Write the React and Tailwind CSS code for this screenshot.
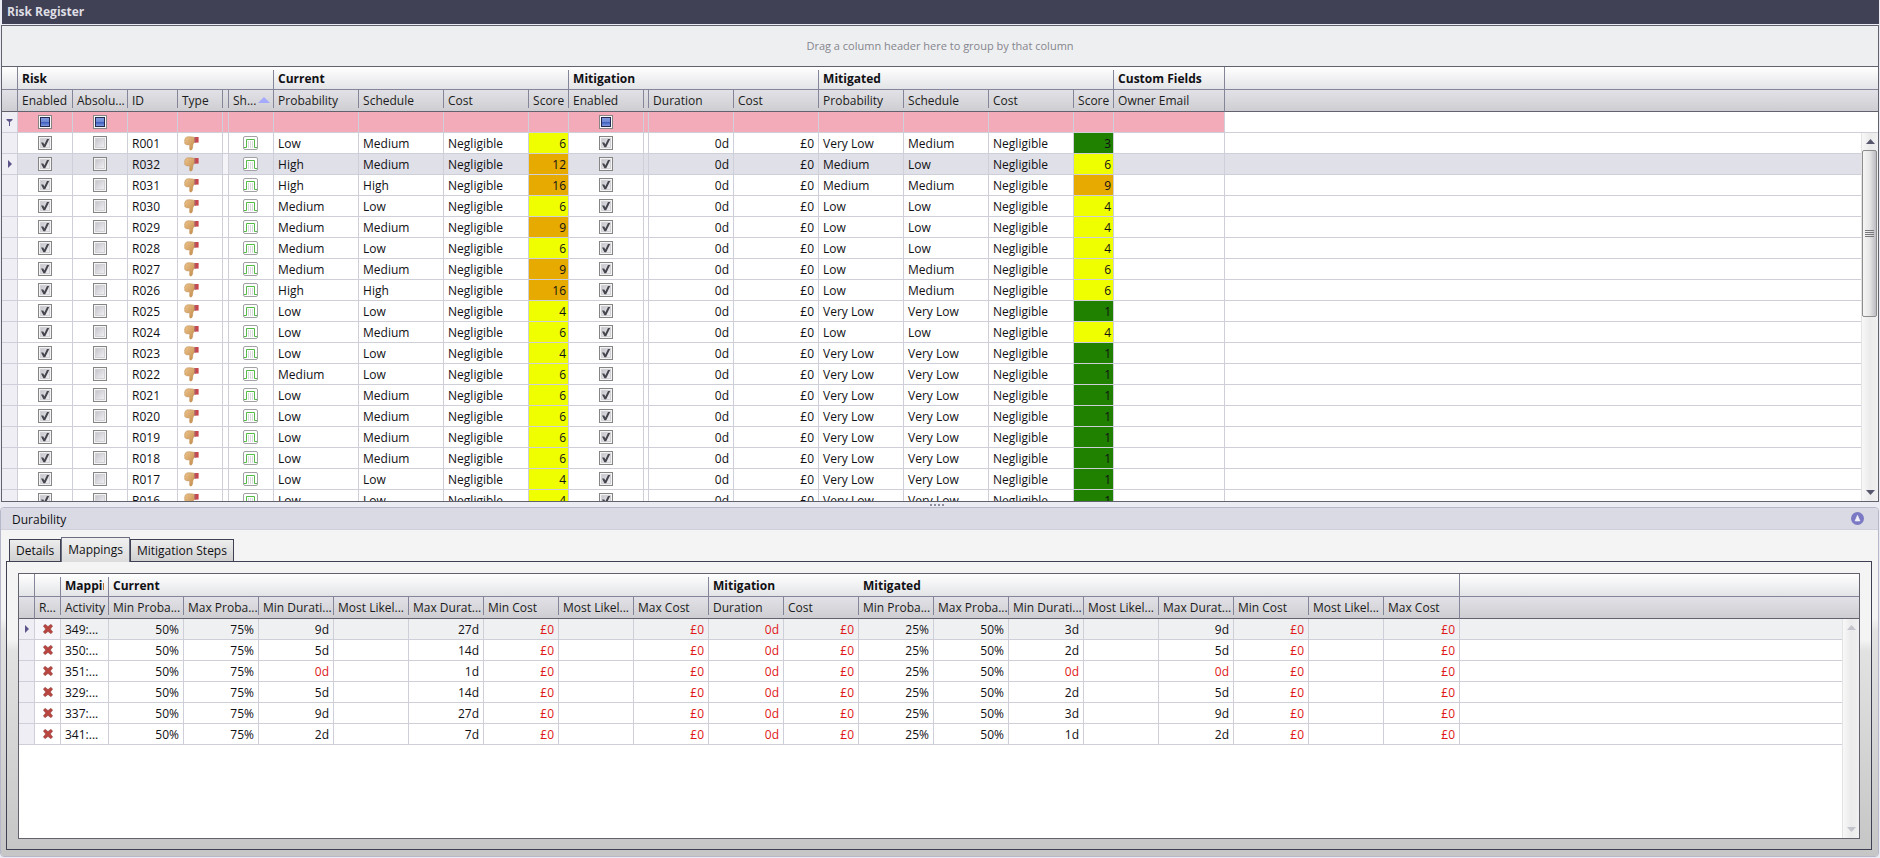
const RISK_ROWS = [
  ["R001", "Low", "Medium", 6, "Very Low", "Medium", 3],
  ["R032", "High", "Medium", 12, "Medium", "Low", 6],
  ["R031", "High", "High", 16, "Medium", "Medium", 9],
  ["R030", "Medium", "Low", 6, "Low", "Low", 4],
  ["R029", "Medium", "Medium", 9, "Low", "Low", 4],
  ["R028", "Medium", "Low", 6, "Low", "Low", 4],
  ["R027", "Medium", "Medium", 9, "Low", "Medium", 6],
  ["R026", "High", "High", 16, "Low", "Medium", 6],
  ["R025", "Low", "Low", 4, "Very Low", "Very Low", 1],
  ["R024", "Low", "Medium", 6, "Low", "Low", 4],
  ["R023", "Low", "Low", 4, "Very Low", "Very Low", 1],
  ["R022", "Medium", "Low", 6, "Very Low", "Very Low", 1],
  ["R021", "Low", "Medium", 6, "Very Low", "Very Low", 1],
  ["R020", "Low", "Medium", 6, "Very Low", "Very Low", 1],
  ["R019", "Low", "Medium", 6, "Very Low", "Very Low", 1],
  ["R018", "Low", "Medium", 6, "Very Low", "Very Low", 1],
  ["R017", "Low", "Low", 4, "Very Low", "Very Low", 1],
  ["R016", "Low", "Low", 4, "Very Low", "Very Low", 1],
];

const MAPPING_ROWS = [
  ["349:...", "9d", "27d", "3d", "9d"],
  ["350:...", "5d", "14d", "2d", "5d"],
  ["351:...", "0d", "1d", "0d", "0d"],
  ["329:...", "5d", "14d", "2d", "5d"],
  ["337:...", "9d", "27d", "3d", "9d"],
  ["341:...", "2d", "7d", "1d", "2d"],
];

const RANGE_HEADERS = [
  "Min Proba...", "Max Proba...", "Min Durati...", "Most Likel...",
  "Max Durat...", "Min Cost", "Most Likel...", "Max Cost",
];

const RISK_COLUMNS = [
  "w-[16px]", "w-[55px]", "w-[55px]", "w-[50px]", "w-[45px]", "w-[6px]", "w-[45px]",
  "w-[85px]", "w-[85px]", "w-[85px]", "w-[40px]", "w-[75px]", "w-[5px]", "w-[85px]",
  "w-[85px]", "w-[85px]", "w-[85px]", "w-[85px]", "w-[40px]", "w-[111px]", "",
];

const MAPPING_COLUMNS = [
  "w-[16px]", "w-[26px]", "w-[48px]",
  ...Array.from({ length: 17 }, () => "w-[75px]"), "w-[76px]", "",
];

function scoreColor(score) {
  if (score >= 9) return "bg-[#e6aa00]";
  if (score >= 4) return "bg-[#f0ff00]";
  return "bg-[#208000]";
}

/* ---------- icons ---------- */

function ThumbDown() {
  return (
    <svg className="block h-[15px] w-[15px]" viewBox="0 0 15 15" aria-hidden="true">
      <defs>
        <linearGradient id="thumb" x1="0" y1="0" x2="1" y2="1">
          <stop offset="0" stopColor="#ecc38c" />
          <stop offset="1" stopColor="#c28a48" />
        </linearGradient>
      </defs>
      <path
        d="M2.4 1.2 C4 0.4 8 0.6 10.6 1.4 L10.8 6 C9.8 7 8.9 8 8.8 9.4 C8.7 11 8.6 12.8 7.6 13.8 C6.6 14.4 5.6 14 5.6 12.8 C5.5 11.4 6 10.2 5.6 8.8 C4.4 9 2.4 9 1.4 8.2 C0.5 7.4 0.5 6.4 0.8 5.6 C0.3 4.8 0.5 3.8 1 3.3 C1 2.3 1.6 1.6 2.4 1.2 Z"
        fill="url(#thumb)" stroke="#bd8a4e" strokeWidth="0.5"
      />
      <rect x="10.6" y="1" width="4" height="5.6" fill="#c8464e" />
      <rect x="10.6" y="1" width="1.2" height="5.6" fill="#a8606a" />
    </svg>
  );
}

function ShapeIcon() {
  return (
    <svg className="ml-[14px] block h-[14px] w-[15px]" viewBox="0 0 15 14" aria-hidden="true">
      <rect x="0.5" y="0.5" width="14" height="13" rx="1.5" fill="#fff" stroke="#a2a2a6" />
      <path d="M5.5 5 V12 M7.5 5 V12 M9.5 5 V12" stroke="#d9d9de" />
      <path d="M1 11.5 H3.5 V3.5 H11.5 V11.5 H14" fill="none" stroke="#55bb47" />
    </svg>
  );
}

function CrossIcon() {
  return (
    <svg className="block h-[10px] w-[10px]" viewBox="0 0 10 10" aria-hidden="true">
      <path
        d="M0.3 2 L2.2 0.3 L5 2.6 L7.8 0.3 L9.7 2 L7.4 5 L9.7 8 L7.8 9.7 L5 7.4 L2.2 9.7 L0.3 8 L2.6 5 Z"
        fill="#b8453f" stroke="#8f4a48" strokeWidth="0.5"
      />
    </svg>
  );
}

function RowArrow() {
  return (
    <svg className="mx-auto block h-[8px] w-[4px]" viewBox="0 0 4 8" aria-hidden="true">
      <path d="M0 0 L4 4 L0 8 Z" fill="#5c5488" />
    </svg>
  );
}

function FilterIcon() {
  return (
    <svg className="mx-auto block h-[7px] w-[7px]" viewBox="0 0 7 7" aria-hidden="true">
      <path d="M0.5 0 H6.5 V1 L4 3 V7 H3 V3 L0.5 1 Z" fill="#5c5488" />
    </svg>
  );
}

/* ---------- controls ---------- */

function CheckBox({ checked, label }) {
  return (
    <span className="mx-auto grid h-[14px] w-[14px]">
      <input
        type="checkbox"
        aria-label={label}
        defaultChecked={checked}
        className="peer col-start-1 row-start-1 m-0 h-[14px] w-[14px] appearance-none border border-[#858585] bg-gradient-to-br from-[#bcbcc4] to-[#fafafc] shadow-[inset_0_0_0_1px_#f4f4f4,inset_0_0_0_2px_#d2d2d6]"
      />
      <svg className="pointer-events-none invisible col-start-1 row-start-1 h-[14px] w-[14px] peer-checked:visible" viewBox="0 0 14 14" aria-hidden="true">
        <path d="M3 6.6 L5.3 6.6 L6.3 8.4 L9 3 L11.2 3 L7.2 11.2 L5.4 11.2 Z" fill="#45454d" />
      </svg>
    </span>
  );
}

function FilterBox({ label }) {
  return (
    <span className="mx-auto grid h-[14px] w-[14px]">
      <input
        type="checkbox"
        aria-label={label}
        className="col-start-1 row-start-1 m-0 h-[14px] w-[14px] appearance-none border border-[#858585] bg-[linear-gradient(#8ba4e4_0%,#6d88d4_48%,#3d5cbc_52%,#a2baf2_100%)] shadow-[inset_0_0_0_1px_#f7f7f7,inset_0_0_0_2px_#23294f]"
      />
    </span>
  );
}

function ScrollBar({ thumb, label }) {
  const arrow = thumb ? "#56566c" : "#c4c4cc";
  return (
    <div className="flex min-h-0 w-[17px] flex-col items-center border-l border-[#e3e3e3] bg-gradient-to-r from-[#f8f8f8] via-[#ebebeb] to-[#f0f0f0]">
      <button type="button" aria-label={`${label} up`} className="flex h-[17px] w-full shrink-0 items-center justify-center">
        <svg className="h-[5px] w-[9px]" viewBox="0 0 9 5"><path d="M4.5 0 L9 5 H0 Z" fill={arrow} /></svg>
      </button>
      <div className="flex w-full flex-1 flex-col">
        {thumb && (
          <div className="flex h-[167px] w-[15px] flex-col items-center justify-center gap-px rounded-[2px] border border-[#8c8c8c] bg-gradient-to-r from-[#f6f6f6] via-[#e6e6e6] to-[#bcbcc2]">
            <span className="h-px w-[9px] bg-[#77777c]" />
            <span className="h-px w-[9px] bg-[#77777c]" />
            <span className="h-px w-[9px] bg-[#77777c]" />
            <span className="h-px w-[9px] bg-[#77777c]" />
          </div>
        )}
      </div>
      <button type="button" aria-label={`${label} down`} className="flex h-[17px] w-full shrink-0 items-center justify-center">
        <svg className="h-[5px] w-[9px]" viewBox="0 0 9 5"><path d="M0 0 H9 L4.5 5 Z" fill={arrow} /></svg>
      </button>
    </div>
  );
}

/* ---------- table parts ---------- */

function Columns({ widths }) {
  return (
    <colgroup>
      {widths.map((w, i) => <col key={i} className={w} />)}
    </colgroup>
  );
}

function BandHead({ span = 1, full, last, children }) {
  return (
    <th
      colSpan={span}
      scope="colgroup"
      className={`h-[23px] border-b border-[#85859a] bg-gradient-to-b from-white to-[#e3e4e7] p-0 align-bottom font-bold ${full ? "border-r" : ""}`}
    >
      <div className={`h-[19px] pr-1 pl-1 text-left leading-[18px] ${full || last ? "" : "border-r border-[#85859a]"}`}>
        <div className="overflow-hidden whitespace-nowrap">{children}</div>
      </div>
    </th>
  );
}

function ColHead({ full, last, tight, children }) {
  return (
    <th
      scope="col"
      className={`h-[22px] border-b border-b-[#62626e] bg-gradient-to-b from-[#e1e1e7] to-[#ceced2] p-0 align-top font-normal text-[#1c1c20] ${full ? "border-r border-r-[#85859a]" : ""}`}
    >
      <div className={`flex h-[18px] items-start text-left leading-[18px] whitespace-nowrap ${tight ? "" : "pt-[2px] pl-1"} ${full || last ? "" : "border-r border-[#85859a]"}`}>
        {children}
      </div>
    </th>
  );
}

function Cell({ tone = "", align = "text-left", pad = "px-1 pt-[2px]", children }) {
  return (
    <td className={`h-[21px] overflow-hidden border-r border-b border-[#cfcfda] p-0 leading-[18px] whitespace-nowrap ${tone} ${align}`}>
      <div className={pad}>{children}</div>
    </td>
  );
}

function RiskTable() {
  return (
    <table className="w-full table-fixed border-separate border-spacing-0 self-start">
      <Columns widths={RISK_COLUMNS} />
      <thead>
        <tr>
          <BandHead full />
          <BandHead span={6}>Risk</BandHead>
          <BandHead span={4}>Current</BandHead>
          <BandHead span={4}>Mitigation</BandHead>
          <BandHead span={4}>Mitigated</BandHead>
          <BandHead full>Custom Fields</BandHead>
          <BandHead last />
        </tr>
        <tr>
          <ColHead full />
          <ColHead>Enabled</ColHead>
          <ColHead>Absolu...</ColHead>
          <ColHead>ID</ColHead>
          <ColHead>Type</ColHead>
          <ColHead tight />
          <ColHead>
            <span className="flex-1">Sh...</span>
            <svg className="mt-[5px] mr-[3px] h-[6px] w-[12px]" viewBox="0 0 12 6" aria-hidden="true">
              <path d="M6 0 L12 6 H0 Z" fill="#a3a9fb" />
            </svg>
          </ColHead>
          <ColHead>Probability</ColHead>
          <ColHead>Schedule</ColHead>
          <ColHead>Cost</ColHead>
          <ColHead>Score</ColHead>
          <ColHead>Enabled</ColHead>
          <ColHead tight />
          <ColHead>Duration</ColHead>
          <ColHead>Cost</ColHead>
          <ColHead>Probability</ColHead>
          <ColHead>Schedule</ColHead>
          <ColHead>Cost</ColHead>
          <ColHead>Score</ColHead>
          <ColHead full>Owner Email</ColHead>
          <ColHead last />
        </tr>
      </thead>
      <tbody>
        <tr>
          <Cell tone="bg-[#eeeef4]" pad=""><FilterIcon /></Cell>
          {RISK_COLUMNS.slice(1, 20).map((_, i) => (
            <Cell key={i} tone="bg-[#f3abba]" pad="">
              {i === 0 && <FilterBox label="Filter risk enabled" />}
              {i === 1 && <FilterBox label="Filter absolute" />}
              {i === 10 && <FilterBox label="Filter mitigation enabled" />}
            </Cell>
          ))}
          <td className="border-b border-[#cfcfda] bg-white" />
        </tr>
        {RISK_ROWS.map(([id, prob, sched, score, mProb, mSched, mScore], i) => {
          const tone = i === 1 ? "bg-[#e0e0e8]" : "bg-white";
          return (
            <tr key={id}>
              <Cell tone="bg-[#eeeef4]" pad="">{i === 1 && <RowArrow />}</Cell>
              <Cell tone={tone} pad=""><CheckBox checked label={`${id} enabled`} /></Cell>
              <Cell tone={tone} pad=""><CheckBox label={`${id} absolute`} /></Cell>
              <Cell tone={tone}>{id}</Cell>
              <Cell tone={tone} pad="pl-[6px]"><ThumbDown /></Cell>
              <Cell tone={i === 1 ? "bg-[#f3f3f8]" : "bg-white"} pad="" />
              <Cell tone={tone} pad=""><ShapeIcon /></Cell>
              <Cell tone={tone}>{prob}</Cell>
              <Cell tone={tone}>{sched}</Cell>
              <Cell tone={tone}>Negligible</Cell>
              <Cell tone={scoreColor(score)} align="text-right" pad="pt-[2px] pr-[2px]">{score}</Cell>
              <Cell tone={tone} pad=""><CheckBox checked label={`${id} mitigation enabled`} /></Cell>
              <Cell tone={tone} pad="" />
              <Cell tone={tone} align="text-right">0d</Cell>
              <Cell tone={tone} align="text-right">£0</Cell>
              <Cell tone={tone}>{mProb}</Cell>
              <Cell tone={tone}>{mSched}</Cell>
              <Cell tone={tone}>Negligible</Cell>
              <Cell tone={scoreColor(mScore)} align="text-right" pad="pt-[2px] pr-[2px]">{mScore}</Cell>
              <Cell tone={tone} />
              <td className={`border-b border-[#cfcfda] ${tone}`} />
            </tr>
          );
        })}
      </tbody>
    </table>
  );
}

function MappingTable() {
  return (
    <table className="w-full table-fixed border-separate border-spacing-0 self-start">
      <Columns widths={MAPPING_COLUMNS} />
      <thead>
        <tr>
          <BandHead full />
          <BandHead />
          <BandHead>Mapping</BandHead>
          <BandHead span={8}>Current</BandHead>
          <BandHead span={2} last>Mitigation</BandHead>
          <BandHead span={8} full>Mitigated</BandHead>
          <BandHead last />
        </tr>
        <tr>
          <ColHead full />
          <ColHead>R...</ColHead>
          <ColHead>Activity</ColHead>
          {RANGE_HEADERS.map((h, i) => <ColHead key={i}>{h}</ColHead>)}
          <ColHead>Duration</ColHead>
          <ColHead>Cost</ColHead>
          {RANGE_HEADERS.map((h, i) => <ColHead key={i} full={i === 7}>{h}</ColHead>)}
          <ColHead last />
        </tr>
      </thead>
      <tbody>
        {MAPPING_ROWS.map(([activity, min, max, mMin, mMax], i) => {
          const tone = i === 0 ? "bg-[#eff0f2]" : "bg-white";
          const values = [
            "50%", "75%", min, "", max, "£0", "", "£0", "0d", "£0",
            "25%", "50%", mMin, "", mMax, "£0", "", "£0",
          ];
          return (
            <tr key={activity}>
              <Cell tone="bg-[#eeeef4]" pad="">{i === 0 && <RowArrow />}</Cell>
              <Cell tone={i === 0 ? "bg-[#f6f6fa]" : "bg-white"} pad="">
                <button type="button" aria-label={`Remove ${activity}`} className="mx-auto block"><CrossIcon /></button>
              </Cell>
              <Cell tone={tone}>{activity}</Cell>
              {values.map((v, j) => (
                <Cell
                  key={j}
                  align="text-right"
                  tone={v === "0d" || v === "£0" ? `${tone} text-[#e01818]` : tone}
                >
                  {v}
                </Cell>
              ))}
              <td className={`border-b border-[#cfcfda] ${tone}`} />
            </tr>
          );
        })}
      </tbody>
    </table>
  );
}

function Tab({ active, children }) {
  return (
    <button
      type="button"
      role="tab"
      aria-selected={active}
      className={
        active
          ? "-mb-px h-[25px] border border-b-0 border-[#6a6c80] bg-gradient-to-b from-[#f0f0f0] to-[#dcdcdc] px-[6px]"
          : "h-[22px] border border-b-0 border-[#3f4152] bg-gradient-to-b from-[#ededed] to-[#d0d0d0] px-[6px]"
      }
    >
      {children}
    </button>
  );
}

export default function App() {
  return (
    <div className="flex h-screen flex-col overflow-hidden bg-[#ebebf3] pr-px font-['Open_Sans',sans-serif] text-[12px] text-[#101014]">
      <section className="flex min-h-0 flex-1 flex-col pl-px">
        <h1 className="ml-px h-[24px] shrink-0 bg-[#414156] pl-[5px] text-[12px] leading-[24px] font-bold text-[#dedee4]">
          Risk Register
        </h1>
        <div className="mt-px flex min-h-0 flex-1 flex-col border border-[#62626e] bg-white">
          <div className="flex h-[41px] shrink-0 items-center justify-center border-b border-[#62626e] bg-[#eeeff1] text-[11px] text-[#85858d]">
            Drag a column header here to group by that column
          </div>
          <div className="grid min-h-0 flex-1 grid-cols-1 grid-rows-1 overflow-hidden">
            <div className="col-start-1 row-start-1 min-h-0 overflow-hidden">
              <RiskTable />
            </div>
            <div className="col-start-1 row-start-1 mt-[66px] flex min-h-0 justify-self-end">
              <ScrollBar thumb label="Scroll risks" />
            </div>
          </div>
        </div>
      </section>

      <div className="flex h-[5px] shrink-0 items-center justify-center gap-[2px] pr-[6px]" role="separator">
        <span className="h-[2px] w-[2px] bg-[#8d8d9c]" />
        <span className="h-[2px] w-[2px] bg-[#8d8d9c]" />
        <span className="h-[2px] w-[2px] bg-[#8d8d9c]" />
        <span className="h-[2px] w-[2px] bg-[#8d8d9c]" />
      </div>

      <section className="mb-px flex h-[350px] shrink-0 flex-col overflow-hidden rounded-[4px] border border-[#b7b7ca]">
        <header className="flex h-[22px] shrink-0 items-center justify-between border-b border-[#d0d0dc] bg-[#dadae4] pr-[14px] pl-[11px]">
          <h2 className="pt-[3px] leading-[18px]">Durability</h2>
          <button type="button" aria-label="Collapse panel">
            <svg className="block h-[13px] w-[13px]" viewBox="0 0 13 13" aria-hidden="true">
              <circle cx="6.5" cy="6.5" r="6.5" fill="#7b79c4" />
              <path d="M6.5 3.2 L9 9 H4 Z" fill="#f1f0f8" stroke="#f1f0f8" strokeWidth="0.6" />
            </svg>
          </button>
        </header>
        <div className="flex min-h-0 flex-1 flex-col bg-[linear-gradient(#f4f4f4_0%,#f4f4f4_27%,#e2e2e2_31%,#c6c6c6_100%)] pt-[7px] pr-[6px] pb-[6px] pl-[5px]">
          <div role="tablist" className="relative flex items-end pl-[3px]">
            <Tab>Details</Tab>
            <Tab active>Mappings</Tab>
            <Tab>Mitigation Steps</Tab>
          </div>
          <div role="tabpanel" className="flex min-h-0 flex-1 flex-col border border-[#3f4152] bg-[linear-gradient(#f4f4f4_0%,#f4f4f4_27%,#e2e2e2_31%,#c6c6c6_100%)] px-[11px] pt-[11px] pb-[10px]">
            <div className="grid min-h-0 flex-1 grid-cols-1 grid-rows-1 overflow-hidden border border-[#62626e] bg-white">
              <div className="col-start-1 row-start-1 min-h-0 overflow-hidden">
                <MappingTable />
              </div>
              <div className="col-start-1 row-start-1 mt-[45px] flex min-h-0 justify-self-end">
                <ScrollBar label="Scroll mappings" />
              </div>
            </div>
          </div>
        </div>
      </section>
    </div>
  );
}
